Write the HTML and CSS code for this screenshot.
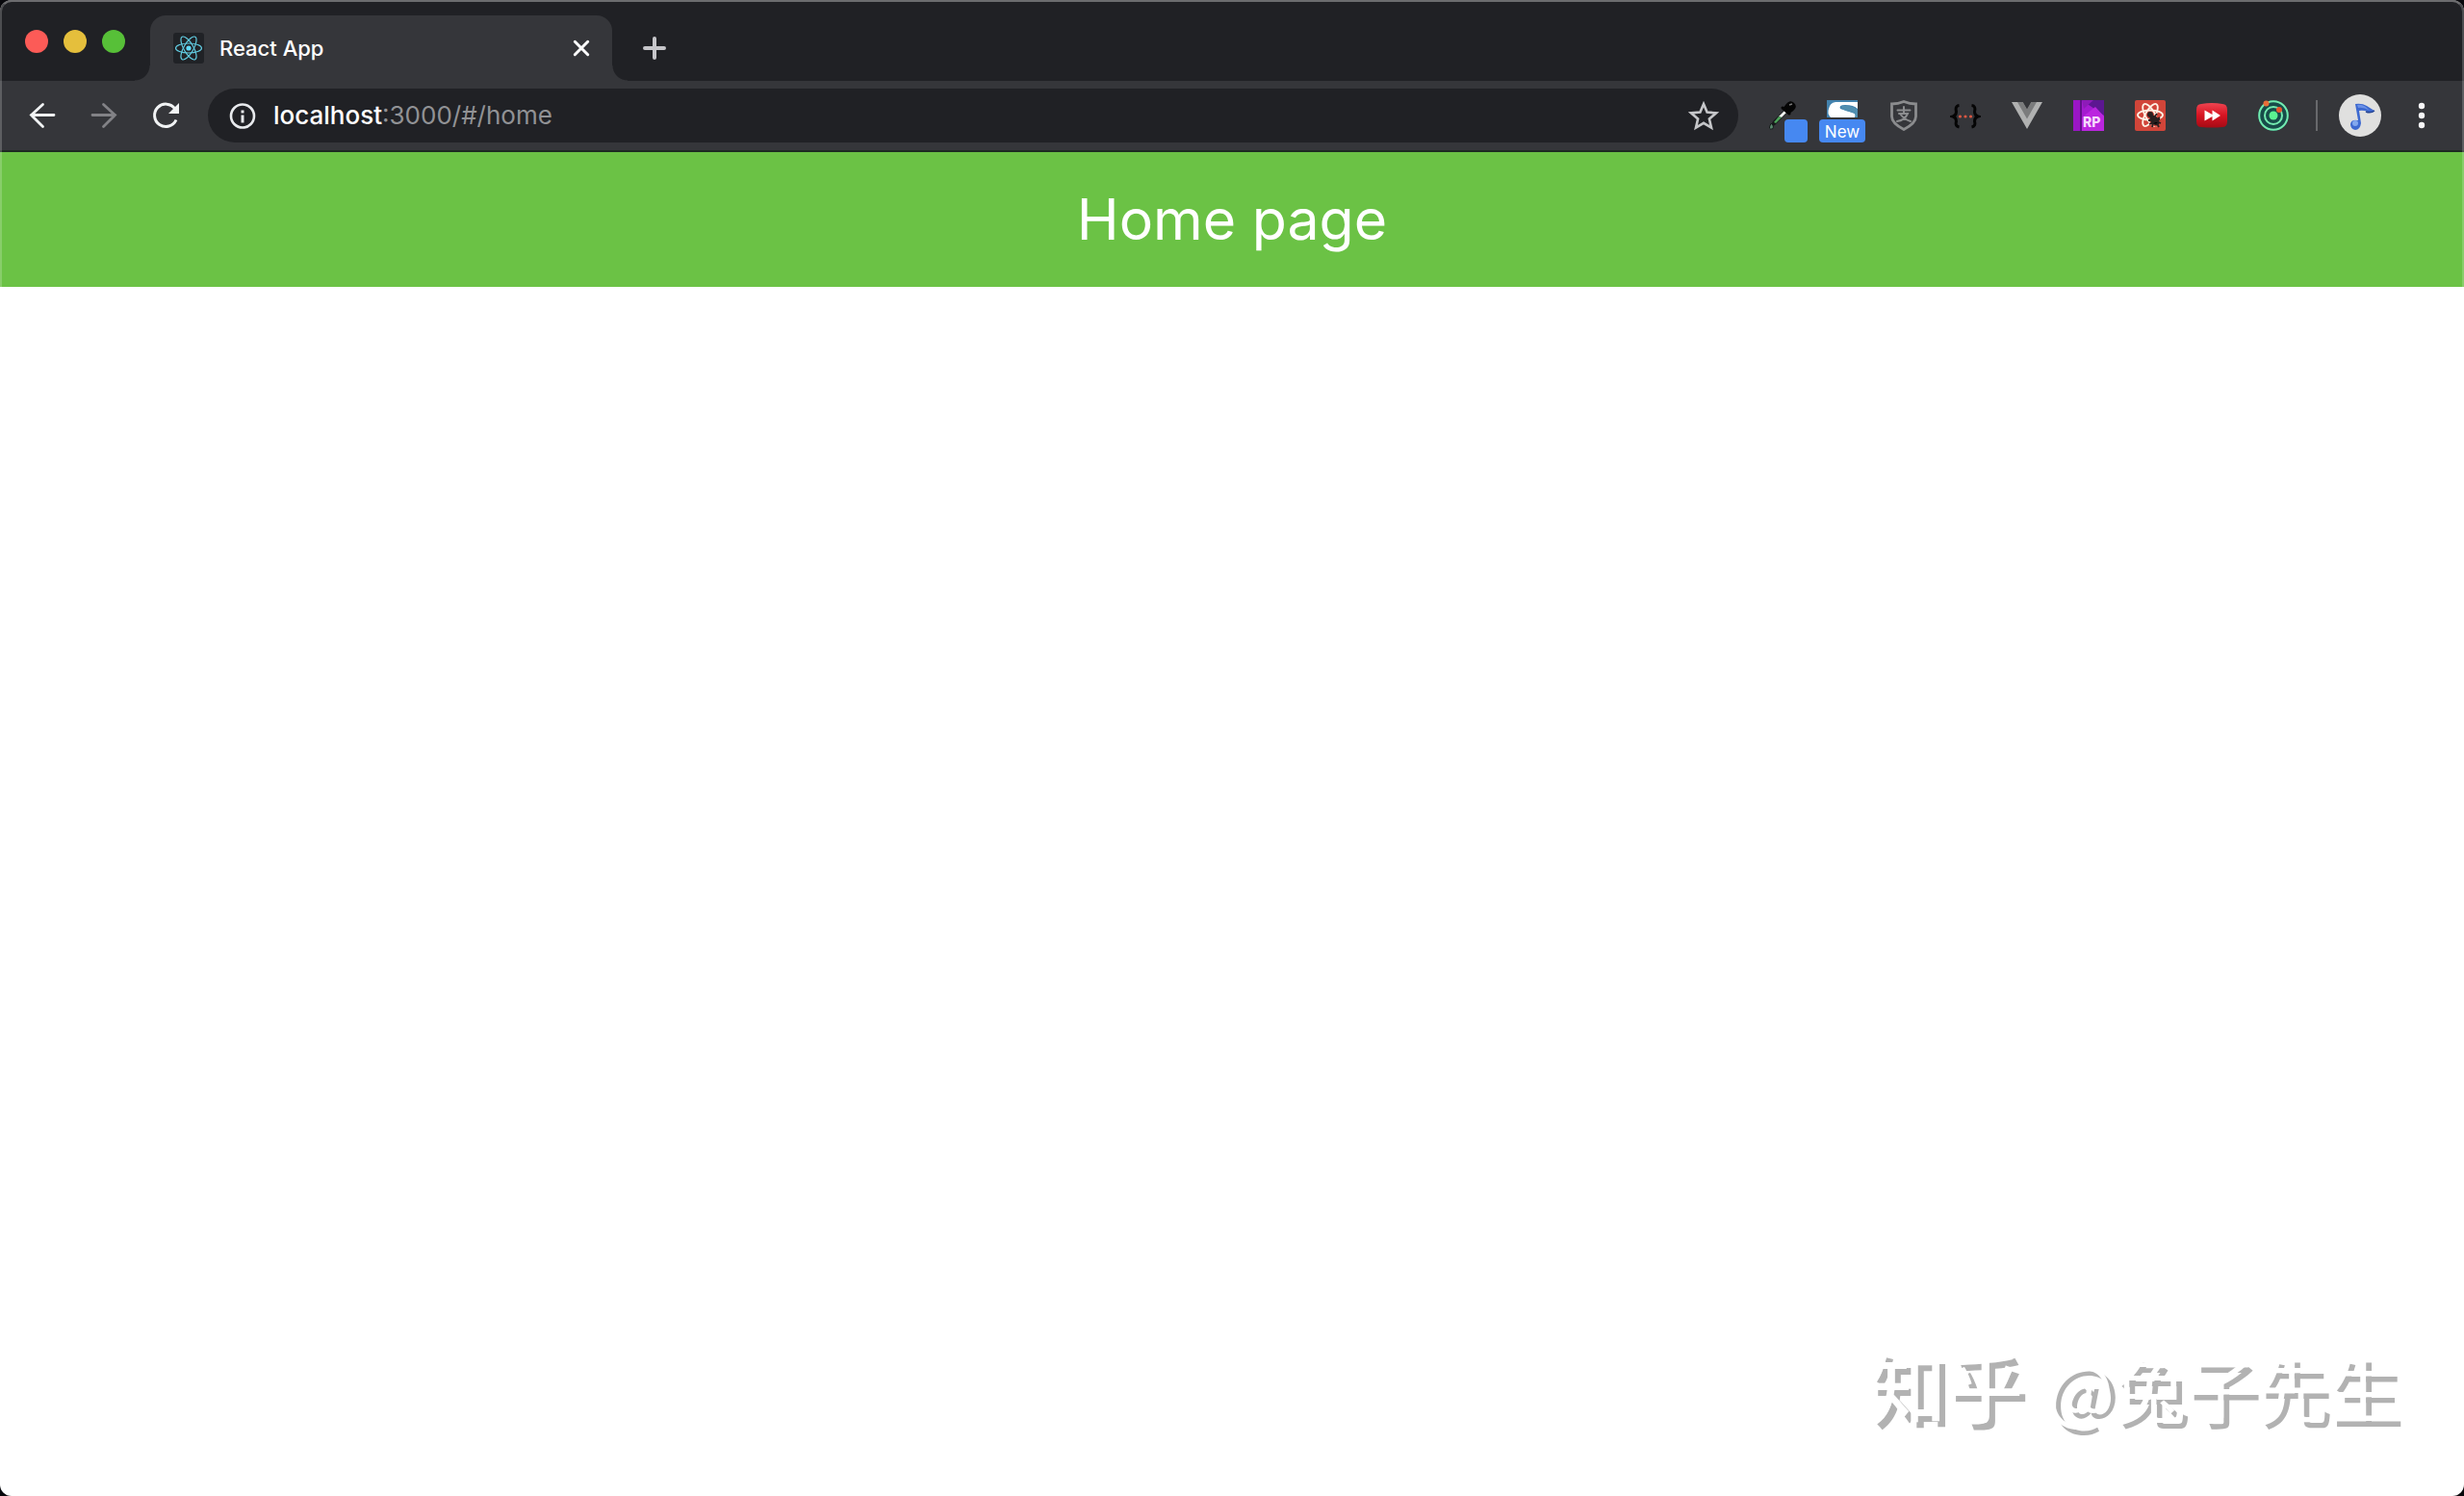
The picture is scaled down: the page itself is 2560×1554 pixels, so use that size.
FILE: index.html
```html
<!DOCTYPE html>
<html lang="en">
<head>
<meta charset="utf-8">
<title>React App</title>
<link rel="stylesheet" href="styles.css">
</head>
<body>
<div class="window">
  <header class="tab-strip">
    <div class="lights">
      <button class="light light-close" aria-label="Close window"></button>
      <button class="light light-min" aria-label="Minimize window"></button>
      <button class="light light-max" aria-label="Zoom window"></button>
    </div>
    <div class="tab">
      <svg class="icon" viewBox="0 0 32 32" aria-hidden="true">
        <rect width="32" height="32" rx="3" fill="#202226"/>
        <g fill="none" stroke="#61cbe0" stroke-width="1.2">
          <ellipse cx="16" cy="16" rx="13.5" ry="5"/>
          <ellipse cx="16" cy="16" rx="13.5" ry="5" transform="rotate(60 16 16)"/>
          <ellipse cx="16" cy="16" rx="13.5" ry="5" transform="rotate(120 16 16)"/>
        </g>
        <circle cx="16" cy="16" r="2.6" fill="#61dafb"/>
      </svg>
      <span class="tab-title">React App</span>
      <button class="tab-close" aria-label="Close tab">
        <svg class="icon" viewBox="0 0 32 32"><path d="M9.300 9.300l13.400 13.400M22.700 9.300L9.300 22.700" stroke="#fff" stroke-width="3" stroke-linecap="round"/></svg>
      </button>
    </div>
    <button class="new-tab" aria-label="New tab">
      <svg class="icon" viewBox="0 0 32 32"><path d="M16 6v20M6 16h20" stroke="#c6c6ca" stroke-width="4" stroke-linecap="round"/></svg>
    </button>
  </header>

  <nav class="toolbar" aria-label="Browser toolbar">
    <button class="slot" aria-label="Back">
      <svg class="icon" viewBox="0 0 32 32"><path d="M28 15.500H4.500M16.500 4.500L4.500 15.500l12 12" fill="none" stroke="#f1f3f4" stroke-width="2.800" stroke-linecap="round"/></svg>
    </button>
    <button class="slot" aria-label="Forward" disabled>
      <svg class="icon" viewBox="0 0 32 32"><path d="M4 15.500h23.500M15.500 4.500l12 11-12 12" fill="none" stroke="#828286" stroke-width="2.800" stroke-linecap="round"/></svg>
    </button>
    <button class="slot" aria-label="Reload">
      <svg class="icon" viewBox="0 0 32 32"><path d="M25.800 9A11.700 11.700 0 1 0 27 20.500" fill="none" stroke="#f1f3f4" stroke-width="3"/><path d="M30 3v11H19z" fill="#f1f3f4"/></svg>
    </button>
    <div class="omnibox">
      <svg class="icon" viewBox="0 0 32 32" aria-hidden="true"><circle cx="16" cy="16.500" r="12" fill="none" stroke="#e8eaed" stroke-width="2.600"/><path d="M14.500 10.500h3v3h-3zM14.500 15.500h3v8h-3z" fill="#e8eaed"/></svg>
      <label class="host" for="url">localhost</label><input class="url" id="url" type="text" value=":3000/#/home" spellcheck="false">
      <button class="star" aria-label="Bookmark this page">
        <svg class="icon" viewBox="0 0 32 32"><path d="M16 4l3.600 8.600 9.300.800-7 6.100 2.100 9.100-8-4.800-8 4.800 2.100-9.100-7-6.100 9.300-.800z" fill="none" stroke="#c5c6c9" stroke-width="2.600"/></svg>
      </button>
    </div>
    <button class="slot" aria-label="Color picker">
      <svg class="icon" viewBox="0 0 32 32">
        <path d="M20.500 9.500l3 3L11 25l-4 3-1-2 2-4z" fill="#151719"/>
        <path d="M20 11l2 2-5 5-3-1z" fill="#f2f5f2"/><path d="M14 17l3 1-6 6-2-1z" fill="#4da45a"/>
        <path d="M18 8l7 6M20 9l3-4q3-4 6-1t-1 6l-4 3z" fill="#050505" stroke="#050505" stroke-width="3" stroke-linecap="round"/>
        <path d="M25 5l3-1" stroke="#777" stroke-width="1.500"/>
        <path d="M6.500 24q-3.500 5-1 6t3-2q0-1-2-4z" fill="#5a8b70" stroke="#141818"/>
      </svg>
      <span class="badge badge-blank"></span>
    </button>
    <button class="slot" aria-label="Saladict">
      <svg class="icon" viewBox="0 0 32 32">
        <path d="M0 0h32v18H0z" fill="#4382ad"/>
        <path d="M9 2h23v7Q28 5 19 5q-7 0-5 4l15 5 3 4H4Q0 14 2 9q1-6 7-7z" fill="#fff"/>
        <path d="M15 6q10-1 17 4v8h-3q2-5-5-6-10-2-9-6z" fill="#518eaf"/>
      </svg>
      <span class="badge badge-new">New</span>
    </button>
    <button class="slot" aria-label="Alipay security">
      <svg class="icon" viewBox="0 0 32 32">
        <g fill="none" stroke="#8b8c8e" stroke-linecap="round"><path d="M16 1.500q6 2.500 12.500 2.500v13q0 7-12.500 13.500Q3.500 24 3.500 17V4Q10 4 16 1.500z" stroke-width="2.800"/>
        <path d="M9.500 10.500h13M16 7v7M11 14h9q-3 7-11 8M12 14q4 6 11 8" stroke-width="2"/></g>
      </svg>
    </button>
    <button class="slot" aria-label="JSON formatter">
      <svg class="icon" viewBox="0 0 32 32">
        <path d="M9.500 5.500Q5 6 6.500 12q0 4-3.500 5 3.500 1 3.500 5Q5 27 9.500 28M22.500 5.500q4.500.500 3 6.500 0 4 3.500 5-3.500 1-3.500 5 1.500 5-3 6" fill="none" stroke="#050505" stroke-width="3"/>
        <g fill="#d95743"><circle cx="10.500" cy="17" r="1.600"/><circle cx="16" cy="17" r="1.600"/><circle cx="21.500" cy="17" r="1.600"/></g>
      </svg>
    </button>
    <button class="slot" aria-label="Vue devtools">
      <svg class="icon" viewBox="0 0 32 32"><path d="M0 2h11l5 8 5-8h11L16 30z" fill="#b0b1b1"/><path d="M6 2h6l4 7 4-7h6L16 19.500z" fill="#7b7c7d"/><path d="M12 2h8l-4 7z" fill="#35363a"/></svg>
    </button>
    <button class="slot" aria-label="Axure RP">
      <svg class="icon" viewBox="0 0 32 32">
        <path d="M0 0h32v32H0z" fill="#a41bd0"/><path d="M9 0h23v16z" fill="#5c1791"/><path d="M9 0h12l-10 9z" fill="#8d1bb8"/><path d="M9 18L23 7l9 10v15H9z" fill="#bb26df"/>
        <path d="M0 0h7v32H0z" fill="#9a16c5"/><path d="M7 0h2v32H7z" fill="#64108c"/>
        <text class="rp" x="10" y="28">RP</text>
      </svg>
    </button>
    <button class="slot" aria-label="React developer tools">
      <svg class="icon" viewBox="0 0 32 32">
        <rect width="32" height="32" rx="2" fill="#d14539"/>
        <g fill="none" stroke="#fff2e5" stroke-width="1.800"><ellipse cx="16" cy="15.500" rx="13" ry="5"/><ellipse cx="16" cy="15.500" rx="13" ry="5" transform="rotate(60 16 15.500)"/><ellipse cx="16" cy="15.500" rx="13" ry="5" transform="rotate(120 16 15.500)"/></g>
        <path d="M15 19l10-3 2 8-5 4-6-3z" fill="#d14539"/>
        <circle cx="16" cy="15" r="3" fill="#2a2020"/>
        <ellipse cx="20.500" cy="21" rx="4" ry="6" transform="rotate(-40 20.500 21)" fill="#2a2020"/>
        <path d="M14 21l12-1M15 25l7-3 5 2M18 28l1-5M20 18l3-4M23 20l3-2M23 24l2 4" stroke="#2a2020" stroke-width="1.800"/>
      </svg>
    </button>
    <button class="slot" aria-label="Video speed">
      <svg class="icon" viewBox="0 0 32 32">
        <defs><linearGradient id="red" x2="0" y2="1"><stop stop-color="#ef4450"/><stop offset=".5" stop-color="#d71422"/><stop offset="1" stop-color="#a60b15"/></linearGradient></defs>
        <path d="M5 4q11-2 22 0 5 0 5 6v12q0 6-5 6-11 1-22 0-5 0-5-6V10q0-6 5-6z" fill="url(#red)"/><path d="M8.500 10.500l8 4.500v-4.500l8.500 5.500-8.500 5.500V17l-8 4.500z" fill="#fff"/>
      </svg>
    </button>
    <button class="slot" aria-label="MobX tools">
      <svg class="icon" viewBox="0 0 32 32">
        <circle cx="16" cy="16" r="16" fill="#174b49"/>
        <g fill="none" stroke="#73ebb0" stroke-width="2"><circle cx="16" cy="16" r="14.800"/><circle cx="16" cy="16" r="9"/></g>
        <circle cx="16" cy="16" r="4.500" fill="#5bf291"/><circle cx="8.500" cy="3.500" r="3" fill="#e86d38"/><circle cx="22" cy="10" r="3" fill="#e8542e"/>
      </svg>
    </button>
    <span class="divider"></span>
    <button class="profile" aria-label="Profile">
      <svg class="avatar" viewBox="0 0 44 44">
        <circle cx="22" cy="22" r="22" fill="#e0e0df"/>
        <path d="M17 10q7-1 12 2 3 2 8 5-2 3-7 1-5-2-9-1l2 13q-1 7-6 7-5-1-5-6 1-5 7-4h1z" fill="#3d69d0"/>
        <path d="M19 11q6-1 11 4l2 2q-6-4-12-3z" fill="#6b91e6"/><circle cx="17" cy="30" r="3" fill="#83a8ee"/><path d="M28 18q5 2 9-1" fill="none" stroke="#254391" stroke-width="1.500"/>
      </svg>
    </button>
    <button class="slot" aria-label="Menu">
      <svg class="icon" viewBox="0 0 32 32"><g fill="#f7f7f8"><circle cx="16" cy="6" r="3.200"/><circle cx="16" cy="16" r="3.200"/><circle cx="16" cy="26" r="3.200"/></g></svg>
    </button>
  </nav>

  <main class="page">
    <h1 class="page-title">Home page</h1>
    <p class="watermark" lang="zh"><span class="brand">知乎</span><span>@兔子先生</span></p>
  </main>
</div>
</body>
</html>
```
FILE: styles.css
```css
* { box-sizing: border-box; }
html { background: #08080c; }
body { margin: 0; font-family: Inter, "Noto Sans CJK SC", sans-serif; }
button { border: 0; padding: 0; background: none; font: inherit; color: inherit; display: flex; align-items: center; justify-content: center; }
.icon { display: block; width: 32px; height: 32px; flex: none; }

.window { position: relative; min-height: 100vh; display: flex; flex-direction: column; background: #fff; border-radius: 12px; overflow: hidden; }
.window::after { content: ""; position: absolute; inset: 0; border: 2px solid rgba(255, 255, 255, .2); border-top-color: rgba(255, 255, 255, .34); border-bottom: 0; border-radius: 12px; pointer-events: none; }

.tab-strip { height: 84px; display: flex; align-items: flex-end; background: #202125; }
.lights { display: flex; gap: 16px; align-self: stretch; align-items: center; padding: 2px 26px 0; width: 156px; }
.light { width: 24px; height: 24px; border-radius: 50%; }
.light-close { background: #fc5b57; }
.light-min { background: #e5bf3c; }
.light-max { background: #57c038; }
.tab { position: relative; width: 480px; height: 68px; display: flex; align-items: center; padding: 0 16px 0 24px; background: #35363a; border-radius: 16px 16px 0 0; }
.tab::before, .tab::after { content: ""; position: absolute; bottom: 0; width: 16px; height: 16px; }
.tab::before { right: 100%; background: radial-gradient(circle at 0 0, transparent 15px, #35363a 16px); }
.tab::after { left: 100%; background: radial-gradient(circle at 100% 0, transparent 15px, #35363a 16px); }
.tab-title { flex: 1; margin-left: 16px; font-size: 22px; font-weight: 500; line-height: 32px; color: #fff; }
.new-tab { width: 88px; height: 68px; }

.toolbar { height: 74px; display: flex; align-items: center; padding-left: 12px; padding-right: 12px; background: #35363a; border-bottom: 2px solid #1d2b22; }
.slot { position: relative; width: 64px; height: 64px; flex: none; }
.omnibox { flex: 1; min-width: 0; height: 56px; margin: 0 12px; padding: 0 20px; display: flex; align-items: center; border-radius: 28px; background: #202125; font-size: 26px; line-height: 36px; }
.host { margin-left: 16px; color: #fff; font-weight: 500; }
.url { flex: 1; min-width: 0; border: 0; padding: 0; background: none; outline: 0; font: inherit; color: #919295; }
.badge { position: absolute; bottom: 4px; height: 24px; border-radius: 4px; background: #4688f1; color: #fff; font-size: 17px; line-height: 26px; }
.badge-blank { right: 4px; width: 24px; }
.badge-new { left: 8px; width: 48px; text-align: center; }
.rp { font: 800 14px Inter, sans-serif; fill: #f5d9fc; }
.divider { width: 2px; height: 32px; margin-left: 12px; background: #68696c; }
.profile { width: 44px; height: 44px; margin-left: 22px; margin-right: 10px; }
.avatar { display: block; width: 44px; height: 44px; }

.page { flex: 1; display: flex; flex-direction: column; justify-content: space-between; }
.page-title { margin: 0; height: 140px; background: #6bc245; color: #fff; text-align: center; font-size: 59px; font-weight: 400; line-height: 140px; }
.watermark { margin: 0; padding: 0 68px 60px; display: flex; justify-content: flex-end; align-items: baseline; gap: 24px; font-family: "Noto Sans CJK SC", sans-serif; font-size: 74px; line-height: 108px; color: #fff; text-shadow: 6px 6px 0 #b2b2b2; }
.brand { font-size: 80px; font-weight: 500; }
```
